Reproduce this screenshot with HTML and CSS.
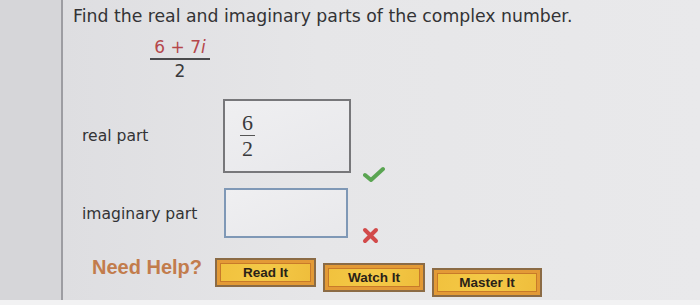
FILE: index.html
```html
<!DOCTYPE html>
<html>
<head>
<meta charset="utf-8">
<link rel="stylesheet" href="styles.css">
</head>
<body>
<div class="page">
  <div class="gutter"></div>
  <div class="main">
    <div class="title">Find the real and imaginary parts of the complex number.</div>
    <div class="expr">
      <span class="num">6 + 7<i>i</i></span>
      <span class="den">2</span>
    </div>
    <div class="row row-real">
      <div class="label">real part</div>
      <div class="box box-real">
        <div class="frac"><span class="fn">6</span><span class="fd">2</span></div>
      </div>
      <svg class="mark check" width="22" height="16" viewBox="0 0 22 16"><path d="M2 9 L8 14 L20 3" fill="none" stroke="#5aa552" stroke-width="4" stroke-linecap="round" stroke-linejoin="round"/></svg>
    </div>
    <div class="row row-imag">
      <div class="label">imaginary part</div>
      <div class="box box-imag"></div>
      <svg class="mark cross" width="17" height="17" viewBox="0 0 17 17"><path d="M3 3 L14 14 M14 3 L3 14" fill="none" stroke="#d24a4a" stroke-width="4" stroke-linecap="round"/></svg>
    </div>
    <div class="help">
      <div class="need">Need Help?</div>
      <div class="btn b1"><span>Read It</span></div>
      <div class="btn b2"><span>Watch It</span></div>
      <div class="btn b3"><span>Master It</span></div>
    </div>
  </div>
</div>
<div class="bottom"></div>
</body>
</html>
```
FILE: styles.css
```css
* { box-sizing: border-box; }
html, body { margin: 0; padding: 0; }
body {
  width: 700px;
  height: 305px;
  overflow: hidden;
  background: #e3e3e5;
  font-family: "DejaVu Sans", Verdana, sans-serif;
  color: #3a3a3c;
}
.page {
  display: flex;
  height: 300px;
}
.gutter {
  width: 63px;
  background: #d6d6d9;
  border-right: 2px solid #9d9da2;
}
.main {
  flex: 1;
  padding-left: 10px;
  padding-top: 5px;
  background: linear-gradient(90deg, #dedee1 0%, #e6e6e8 40%, #e9e9eb 100%);
}
.title {
  font-size: 17.3px;
  line-height: 22px;
  color: #333335;
}
.expr {
  display: flex;
  flex-direction: column;
  align-items: center;
  width: 60px;
  margin-left: 77px;
  margin-top: 11px;
  font-size: 17px;
}
.num {
  color: #b5474b;
  line-height: 18px;
  padding-bottom: 2px;
  border-bottom: 2px solid #4a4a4c;
  width: 100%;
  text-align: center;
}
.num i { font-style: italic; }
.den { line-height: 20px; padding-top: 1px; color: #3a3a3c; }
.row {
  display: flex;
  align-items: center;
}
.label {
  width: 150px;
  padding-left: 9px;
  font-size: 15.6px;
  color: #333335;
}
.row-real { margin-top: 18px; height: 74px; }
.box {
  background: linear-gradient(160deg, #efeff1, #e8e8eb);
}
.box-real {
  width: 128px;
  height: 74px;
  border: 2px solid #77777a;
  padding-left: 15px;
  display: flex;
  align-items: center;
}
.frac {
  display: flex;
  flex-direction: column;
  align-items: center;
  font-family: "Liberation Serif", "Times New Roman", serif;
  font-size: 22px;
  color: #3a3a3c;
}
.fn { line-height: 20px; padding-bottom: 2px; border-bottom: 1.5px solid #555; padding-left: 2px; padding-right: 2px; }
.fd { line-height: 20px; padding-top: 3px; }
.mark { align-self: flex-end; margin-left: 12px; }
.check { margin-bottom: -9px; }
.row-imag { margin-top: 15px; height: 50px; }
.row-imag .label { padding-top: 2px; }
.box-imag {
  width: 124px;
  height: 50px;
  margin-left: 1px;
  border: 2px solid #7f98b6;
}
.cross { margin-bottom: -6px; margin-left: 14px; }
.help {
  display: flex;
  align-items: flex-start;
  margin-top: 17px;
}
.need {
  font-family: "Liberation Sans", Arial, sans-serif;
  font-weight: bold;
  font-size: 20px;
  color: #c27c4c;
  margin-left: 19px;
  width: 123px;
  line-height: 24px;
}
.btn {
  width: 101px;
  height: 29px;
  border: 2px solid #8b6b45;
  background: #e39a36;
  padding: 3px;
  margin-right: 7px;
}
.btn span {
  display: flex;
  align-items: center;
  justify-content: center;
  height: 100%;
  border: 1px solid #c87a2a;
  background: linear-gradient(100deg, #f1c23e, #f4c947 50%, #efbe3c);
  font-family: "Liberation Sans", Arial, sans-serif;
  font-weight: bold;
  font-size: 13.5px;
  color: #2a2218;
}
.b1 { margin-top: 3px; }
.b2 { margin-top: 8px; width: 102px; }
.b3 { margin-top: 13px; width: 110px; }
.bottom {
  height: 5px;
  background: #f2f2f3;
}
```
